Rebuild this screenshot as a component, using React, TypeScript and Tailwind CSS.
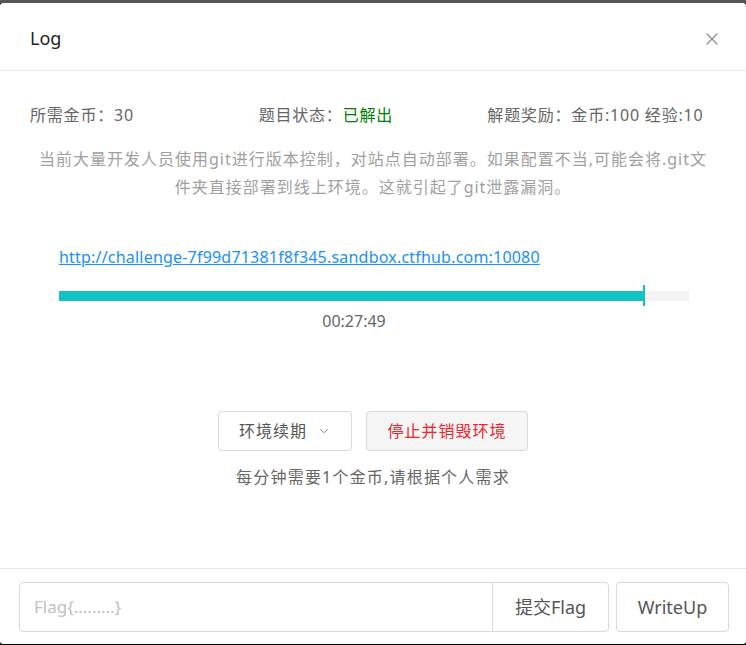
import { X, ChevronDown } from "lucide-react";

const font = { fontFamily: '"Segoe UI", "Noto Sans", "Noto Sans CJK SC", sans-serif' };

export default function App() {
  return (
    <div className="flex h-[645px] w-[746px] flex-col bg-black" style={font}>
      <div className="h-[3px] bg-[#555555]"></div>
      <div className="flex flex-1 flex-col rounded-[3px] bg-white">
        <div className="flex h-[68px] items-center justify-between border-b border-[#e8e8e8] pl-[30px] pr-[24px]">
          <span className="pt-[4px] text-[18px] text-[#222]">Log</span>
          <X className="mt-[4px] h-[20px] w-[20px] text-[#8c8c8c]" strokeWidth={1.5} />
        </div>

        <div className="flex flex-1 flex-col px-[30px]">
          <div className="mt-[32px] grid grid-cols-3 text-[16px] leading-[24px] tracking-[0.8px] text-[#666]">
            <span>所需金币：30</span>
            <span>
              题目状态：<span className="text-[#008000]">已解出</span>
            </span>
            <span>解题奖励：金币:100 经验:10</span>
          </div>

          <p className="mt-[18px] px-[4px] text-center text-[16px] leading-[28px] tracking-[1px] text-[#a0a0a0]">
            当前大量开发人员使用git进行版本控制，对站点自动部署。如果配置不当,可能会将.git文件夹直接部署到线上环境。这就引起了git泄露漏洞。
          </p>

          <div className="mt-[44px] pl-[29px] pr-[27px]">
            <a className="text-[16px] leading-[24px] tracking-[0.2px] text-[#1890ff] underline" href="#">
              http://challenge-7f99d71381f8f345.sandbox.ctfhub.com:10080
            </a>
            <div className="relative mt-[22px] h-[10px] w-[630px] bg-[#f3f3f3]">
              <div className="h-full w-[585px] bg-[#13c2c2]"></div>
              <div className="absolute left-[584px] top-[-6px] h-[21px] w-[2px] bg-[#13c2c2]"></div>
            </div>
            <div className="mt-[10px] w-[590px] text-center text-[16px] leading-[20px] text-[#666]">00:27:49</div>
          </div>

          <div className="mt-[80px] flex justify-center gap-[14px]">
            <button className="flex h-[40px] w-[134px] items-center justify-center gap-[10px] rounded-[4px] border border-[#d9d9d9] bg-white text-[16px] tracking-[1px] text-[#555]">
              环境续期
              <ChevronDown className="h-[14px] w-[14px] text-[#777]" strokeWidth={1.5} />
            </button>
            <button className="h-[40px] w-[162px] rounded-[4px] border border-[#d9d9d9] bg-[#f5f5f5] text-[16px] tracking-[1px] text-[#f5222d]">
              停止并销毁环境
            </button>
          </div>

          <p className="mt-[14px] text-center text-[16px] leading-[24px] tracking-[1.2px] text-[#666]">每分钟需要1个金币,请根据个人需求</p>
        </div>

        <div className="flex gap-[7px] border-t border-[#e8e8e8] pb-[12px] pl-[19px] pr-[17px] pt-[13px]">
          <div className="flex h-[50px] flex-1 rounded-[4px] border border-[#d9d9d9]">
            <input
              className="flex-1 px-[14px] text-[17px] text-[#555] outline-none placeholder:text-[#c0c0c0]"
              placeholder="Flag{.........}"
              style={font}
            />
            <button className="w-[116px] border-l border-[#d9d9d9] text-[18px] text-[#555]">提交Flag</button>
          </div>
          <button className="h-[50px] w-[113px] rounded-[4px] border border-[#d9d9d9] text-[18px] text-[#555]">WriteUp</button>
        </div>
      </div>
      <div className="h-[1px] bg-black"></div>
    </div>
  );
}
